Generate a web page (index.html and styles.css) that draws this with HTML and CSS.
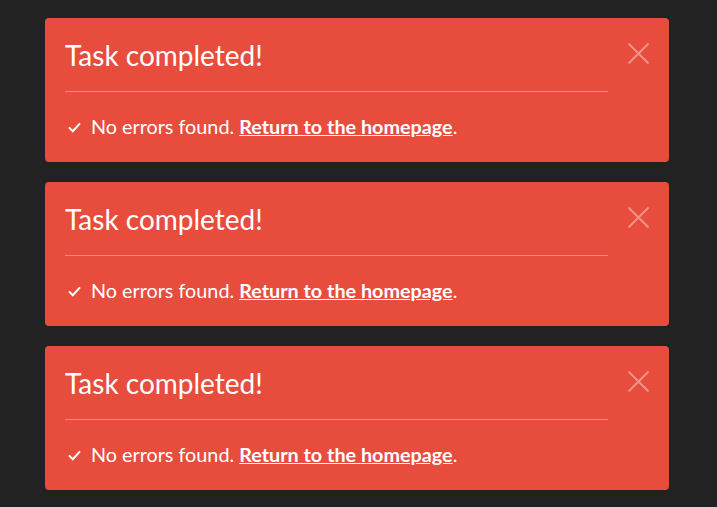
FILE: index.html
```html
<!DOCTYPE html>
<html>
<head>
<meta charset="utf-8">
<link rel="stylesheet" href="styles.css">
</head>
<body>
<div class="stack">
  <div class="alert">
    <div class="alert-main">
      <h2 class="alert-title">Task completed!</h2>
      <hr class="alert-rule">
      <p class="alert-text"><svg class="check" viewBox="0 0 13 11" width="13" height="11"><polyline points="1,5.4 4.8,9.2 12,1.4" fill="none" stroke="#fff" stroke-width="2"/></svg>No errors found. <a class="alert-link" href="#">Return to the homepage</a>.</p>
    </div>
    <button class="close" aria-label="Close"><svg viewBox="0 0 21 21" width="21" height="21"><path d="M0.5 0.5 L20.5 20.5 M20.5 0.5 L0.5 20.5" stroke="currentColor" stroke-width="2" fill="none"/></svg></button>
  </div>
  <div class="alert">
    <div class="alert-main">
      <h2 class="alert-title">Task completed!</h2>
      <hr class="alert-rule">
      <p class="alert-text"><svg class="check" viewBox="0 0 13 11" width="13" height="11"><polyline points="1,5.4 4.8,9.2 12,1.4" fill="none" stroke="#fff" stroke-width="2"/></svg>No errors found. <a class="alert-link" href="#">Return to the homepage</a>.</p>
    </div>
    <button class="close" aria-label="Close"><svg viewBox="0 0 21 21" width="21" height="21"><path d="M0.5 0.5 L20.5 20.5 M20.5 0.5 L0.5 20.5" stroke="currentColor" stroke-width="2" fill="none"/></svg></button>
  </div>
  <div class="alert">
    <div class="alert-main">
      <h2 class="alert-title">Task completed!</h2>
      <hr class="alert-rule">
      <p class="alert-text"><svg class="check" viewBox="0 0 13 11" width="13" height="11"><polyline points="1,5.4 4.8,9.2 12,1.4" fill="none" stroke="#fff" stroke-width="2"/></svg>No errors found. <a class="alert-link" href="#">Return to the homepage</a>.</p>
    </div>
    <button class="close" aria-label="Close"><svg viewBox="0 0 21 21" width="21" height="21"><path d="M0.5 0.5 L20.5 20.5 M20.5 0.5 L0.5 20.5" stroke="currentColor" stroke-width="2" fill="none"/></svg></button>
  </div>
</div>
</body>
</html>
```
FILE: styles.css
```css
html, body {
  margin: 0;
  padding: 0;
  background: #222222;
}
body {
  font-family: Lato, "Open Sans", sans-serif;
  color: #ffffff;
}
.stack {
  display: flex;
  flex-direction: column;
  gap: 20px;
  padding: 18px 0 0 45px;
  width: 624px;
}
.alert {
  background: #e74c3c;
  border-radius: 4px;
  padding: 20px;
  display: flex;
  align-items: flex-start;
  gap: 20px;
  height: 144px;
  box-sizing: border-box;
}
.alert-main {
  flex: 1;
}
.alert-title {
  margin: 0;
  font-size: 28px;
  font-weight: 400;
  line-height: 34px;
}
.alert-rule {
  border: 0;
  border-top: 1px solid rgba(255, 255, 255, 0.35);
  margin: 19px 0 0;
}
.alert-text {
  margin: 22px 0 0;
  font-size: 19.8px;
  line-height: 24px;
}
.check {
  margin: 0 10px 0 3px;
  vertical-align: 1px;
}
.alert-link {
  color: #ffffff;
  font-weight: 700;
  text-decoration: underline;
}
.close {
  background: none;
  border: 0;
  padding: 0;
  margin-top: 5px;
  color: rgba(255, 255, 255, 0.4);
  width: 21px;
  height: 21px;
  display: flex;
  cursor: pointer;
}
```
